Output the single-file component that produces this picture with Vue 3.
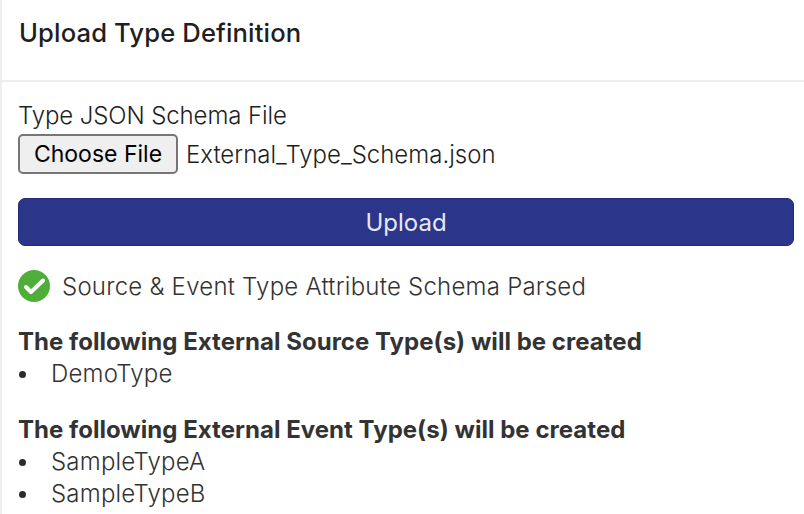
<script setup>
const sourceTypes = ['DemoType']
const eventTypes = ['SampleTypeA', 'SampleTypeB']
</script>

<template>
  <div class="panel">
    <header class="panel-header">
      <h2>Upload Type Definition</h2>
    </header>
    <div class="panel-body">
      <label class="field-label">Type JSON Schema File</label>
      <div class="file-row">
        <button class="file-button">Choose File</button>
        <span class="file-name">External_Type_Schema.json</span>
      </div>
      <button class="upload-button">Upload</button>
      <div class="status">
        <svg class="status-icon" viewBox="0 0 32 32" width="32" height="32">
          <circle cx="16" cy="16" r="16" fill="#4fae3a" />
          <path d="M8 17l5 5L25 10.5" fill="none" stroke="#fff" stroke-width="4" stroke-linecap="round" stroke-linejoin="round" />
        </svg>
        <span>Source &amp; Event Type Attribute Schema Parsed</span>
      </div>
      <section class="type-group">
        <strong>The following External Source Type(s) will be created</strong>
        <ul>
          <li v-for="name in sourceTypes" :key="name">{{ name }}</li>
        </ul>
      </section>
      <section class="type-group">
        <strong>The following External Event Type(s) will be created</strong>
        <ul>
          <li v-for="name in eventTypes" :key="name">{{ name }}</li>
        </ul>
      </section>
    </div>
  </div>
</template>

<style>
html, body {
  margin: 0;
  background: #fff;
  overflow: hidden;
}
</style>

<style scoped>
.panel {
  box-sizing: border-box;
  width: 804px;
  height: 514px;
  overflow: hidden;
  border-left: 2px solid #eeeeee;
  font-family: Inter, "Liberation Sans", sans-serif;
  color: #1f1f1f;
}

.panel-header {
  height: 80px;
  border-bottom: 2px solid #eeeeee;
  padding-left: 17px;
  display: flex;
  align-items: flex-start;
}

h2 {
  margin: 15px 0 0;
  font-size: 25.6px;
  line-height: 36px;
  font-weight: 500;
  letter-spacing: 0.14px;
}

.panel-body {
  padding: 16px 10px 0 16px;
}

.field-label {
  display: block;
  font-size: 24px;
  line-height: 36px;
  font-weight: 300;
  letter-spacing: -0.1px;
}

.file-row {
  display: flex;
  align-items: center;
  gap: 8px;
}

.file-button {
  box-sizing: border-box;
  width: 160px;
  height: 40px;
  padding: 0;
  border: 2px solid #767676;
  border-radius: 5px;
  background: #efefef;
  font-family: inherit;
  font-size: 23px;
  color: #000;
}

.file-name {
  font-size: 24px;
  font-weight: 300;
}

.upload-button {
  display: block;
  box-sizing: border-box;
  width: 776px;
  height: 48px;
  margin-top: 24px;
  padding: 0;
  border: 1px solid #232a78;
  border-radius: 7px;
  background: #2b358a;
  color: #e6e8f5;
  font-family: inherit;
  font-size: 24px;
  font-weight: 400;
}

.status {
  display: flex;
  align-items: center;
  gap: 12px;
  margin-top: 24px;
  font-size: 24px;
  font-weight: 300;
  letter-spacing: 0.23px;
  color: #333;
}

.status-icon {
  flex: none;
}

.type-group {
  font-size: 24px;
  line-height: 32px;
  color: #333;
  margin-top: 24px;
}

.type-group strong {
  font-weight: 700;
  letter-spacing: 0.03px;
}

ul {
  list-style: none;
  margin: 0;
  padding: 0;
}

li {
  display: flex;
  align-items: center;
  gap: 25px;
  font-weight: 300;
  letter-spacing: 0.2px;
}

li::before {
  content: "";
  width: 7px;
  height: 7px;
  margin-left: 1px;
  border-radius: 50%;
  background: #2b2b2b;
}
</style>
